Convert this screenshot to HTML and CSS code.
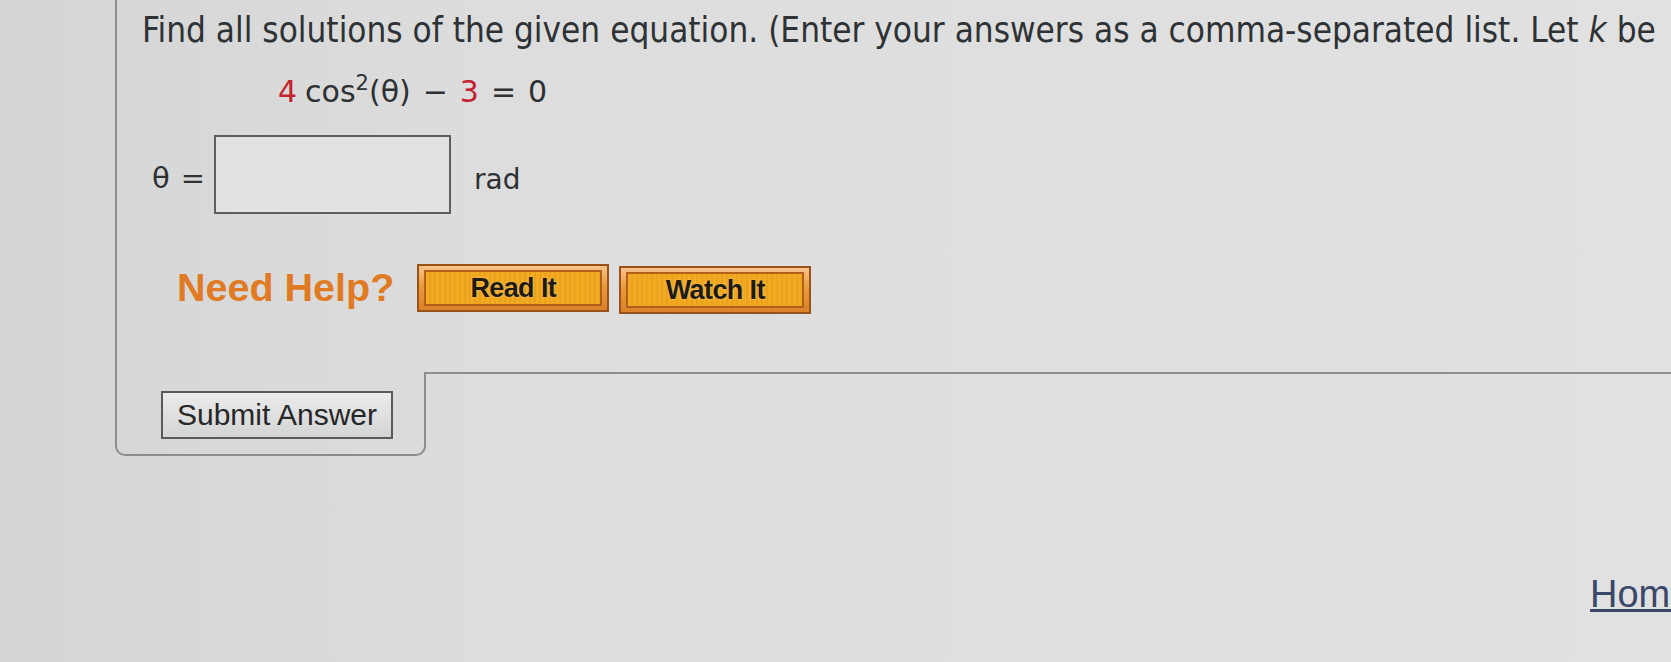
FILE: index.html
```html
<!DOCTYPE html>
<html lang="en">
<head>
<meta charset="utf-8">
<title>Find all solutions</title>
<link rel="stylesheet" href="styles.css">
</head>
<body>
<div class="page">
  <div class="panel">
    <div class="question">
      <p class="prompt">Find all solutions of the given equation. (Enter your answers as a comma-separated list. Let <i>k</i> be</p>
      <div class="equation">
        <span class="red lead">4</span><span>cos<sup>2</sup>(θ)</span><span class="op">−</span><span class="red">3</span><span class="rel">=</span><span>0</span>
      </div>
      <div class="answer-row">
        <span class="var">θ</span>
        <span class="equals">=</span>
        <span class="answer-box"></span>
        <span class="unit">rad</span>
      </div>
      <div class="help-row">
        <span class="need-help">Need Help?</span>
        <a class="help-btn"><span class="help-inner">Read It</span></a>
        <a class="help-btn watch"><span class="help-inner">Watch It</span></a>
      </div>
    </div>
    <div class="footer">
      <div class="submit-cell"><button class="submit">Submit Answer</button></div>
      <div class="footer-rest"></div>
    </div>
  </div>
  <div class="home-row"><a class="home">Home</a></div>
</div>
</body>
</html>
```

FILE: styles.css
```css
html, body {
  margin: 0;
  padding: 0;
  height: 662px;
  overflow: hidden;
}

body {
  background: linear-gradient(90deg, #d4d6d5 0%, #dcdddc 30%, #e0e1e0 100%);
  font-family: "DejaVu Sans", Verdana, sans-serif;
  color: #34383b;
}

.page {
  width: 1671px;
  height: 662px;
  overflow: hidden;
}

.panel {
  margin-left: 115px;
}

.question {
  box-sizing: border-box;
  height: 372px;
  border-left: 2px solid #8c8e8e;
  padding: 1px 0 0 25px;
}

.prompt {
  margin: 9px 0 0 0;
  font-family: "DejaVu Sans Condensed", "DejaVu Sans", Verdana, sans-serif;
  font-stretch: condensed;
  font-size: 34.8px;
  line-height: 41px;
  white-space: nowrap;
  color: #2e3235;
}

.equation {
  margin: 23px 0 0 136px;
  font-size: 30px;
  line-height: 35px;
  color: #2e3033;
  white-space: nowrap;
}

.equation sup {
  font-size: 70%;
  line-height: 0;
  vertical-align: 0.55em;
}

.red {
  color: #c4222f;
}

.lead {
  margin-right: 8px;
}

.op,
.rel {
  margin: 0 12px;
}

.answer-row {
  display: flex;
  align-items: center;
  margin: 26px 0 0 10px;
  font-size: 29px;
  color: #2e3033;
}

.var {
  margin: 6px 11px 0 0;
}

.equals {
  margin: 6px 9px 0 0;
}

.answer-box {
  box-sizing: border-box;
  width: 237px;
  height: 79px;
  border: 2px solid #5c5e5f;
  background: #e1e2e1;
}

.unit {
  margin: 10px 0 0 23px;
  font-size: 28px;
}

.help-row {
  display: flex;
  align-items: center;
  margin: 48px 0 0 35px;
}

.need-help {
  font-family: "Liberation Sans", Arial, sans-serif;
  font-weight: bold;
  font-size: 39.5px;
  color: #e07b24;
  margin: -2px 23px 0 0;
}

.help-btn {
  box-sizing: border-box;
  width: 192px;
  height: 48px;
  padding: 4px 5px;
  border: 2px solid #9a521b;
  background: linear-gradient(#f7c48a, #e99a3c 45%, #dc8228);
  margin-right: 10px;
}

.help-btn.watch {
  margin-top: 4px;
}

.help-inner {
  box-sizing: border-box;
  display: flex;
  align-items: center;
  justify-content: center;
  height: 100%;
  border: 2px solid #b0601c;
  background: repeating-linear-gradient(90deg, #f2aa22 0, #f2aa22 3px, #eca11c 3px, #eca11c 5px);
  font-family: "Liberation Sans", Arial, sans-serif;
  font-weight: bold;
  font-size: 27px;
  letter-spacing: -0.6px;
  color: #1f1a12;
  text-shadow: 0 0 2px #f8d48c;
}

.footer {
  display: flex;
}

.submit-cell {
  box-sizing: border-box;
  width: 311px;
  height: 84px;
  border: 2px solid #8c8e8e;
  border-top: none;
  border-radius: 0 0 10px 10px;
  padding: 19px 0 0 44px;
}

.submit {
  box-sizing: border-box;
  width: 232px;
  height: 48px;
  border: 2px solid #585a5b;
  background: linear-gradient(#ebebeb, #d3d4d4);
  font-family: "Liberation Sans", Arial, sans-serif;
  font-size: 30px;
  color: #262728;
  padding: 0;
}

.footer-rest {
  flex: 1;
  border-top: 2px solid #8c8e8e;
}

.home-row {
  margin-top: 116px;
  padding-left: 1590px;
  white-space: nowrap;
}

.home {
  font-family: "Liberation Sans", Arial, sans-serif;
  font-size: 38px;
  line-height: 44px;
  color: #3a4768;
  text-decoration: underline;
}
```
